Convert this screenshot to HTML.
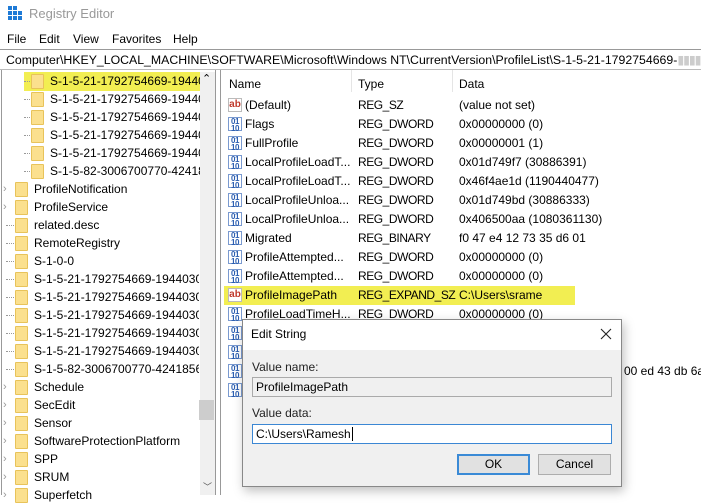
<!DOCTYPE html>
<html><head><meta charset="utf-8"><style>
*{margin:0;padding:0;box-sizing:border-box}
body{width:701px;height:495px;overflow:hidden;background:#fff;font-family:"Liberation Sans",sans-serif;font-size:12px;color:#000;position:relative}
.a{position:absolute;white-space:nowrap}
.f{position:absolute;width:13px;height:15px;background:#fbe08e;border:1px solid #e8c35a;border-radius:1px}
.ic{position:absolute;width:14px;height:14px;font-size:8px;line-height:7px;font-weight:bold;color:#2a5db0;border:1px solid #7a9ad0;background:#fff;text-align:center;letter-spacing:-0.5px}
.ab{position:absolute;width:14px;height:14px;font-size:10px;line-height:12px;font-weight:bold;color:#c0392b;border:1px solid #bbb;background:#fff;text-align:center}
.dot{position:absolute;border-top:1px dotted #999;width:8px}
.arr{position:absolute;color:#999;font-size:11px}
.ty{letter-spacing:-0.45px}
</style></head><body>
<div class="a" style="left:8px;top:6px;width:14px;height:14px;display:grid;grid-template-columns:repeat(3,4px);gap:1px">
<i style="background:#1e7ad6"></i><i style="background:#1e7ad6"></i><i style="background:#fff"></i><i style="background:#1e7ad6"></i><i style="background:#1e7ad6"></i><i style="background:#1e7ad6"></i><i style="background:#1e7ad6"></i><i style="background:#1e7ad6"></i><i style="background:#1e7ad6"></i></div>
<div class="a" style="left:29px;top:6px;font-size:13px;color:#999">Registry Editor</div>
<div class="a" style="left:7px;top:32px;font-size:12px">File</div>
<div class="a" style="left:39px;top:32px">Edit</div>
<div class="a" style="left:73px;top:32px">View</div>
<div class="a" style="left:112px;top:32px">Favorites</div>
<div class="a" style="left:173px;top:32px">Help</div>
<div class="a" style="left:0;top:49px;width:701px;height:21px;border-top:1px solid #999;border-bottom:1px solid #bbb;padding:3px 0 0 6px;font-size:12.3px">Computer\HKEY_LOCAL_MACHINE\SOFTWARE\Microsoft\Windows NT\CurrentVersion\ProfileList\S-1-5-21-1792754669-<span style="color:#ccc;letter-spacing:-1px">▮▮▮▮▮▮▮</span></div>
<div class="a" style="left:0;top:70px;width:216px;height:425px;border-right:1px solid #999"></div>
<div class="a" style="left:1px;top:70px;height:425px;border-left:1px solid #999"></div>
<div class="a" style="left:24px;top:72px;width:186px;height:19px;background:#f2ee52"></div>
<div id="tree"></div>
<div class="a" style="left:200px;top:72px;width:15px;height:423px;background:#f0f0f0"></div>
<div class="a" style="left:199px;top:400px;width:15px;height:20px;background:#cdcdcd"></div>
<div class="a" style="left:202px;top:72px;font-size:11px">⌃</div>
<div class="a" style="left:203px;top:480px;font-size:9px;color:#555">﹀</div>
<div class="a" style="left:220px;top:70px;width:481px;height:425px;border-left:1px solid #999"></div>
<div class="a" style="left:229px;top:77px">Name</div>
<div class="a" style="left:351px;top:70px;height:22px;border-left:1px solid #e5e5e5"></div>
<div class="a" style="left:358px;top:77px">Type</div>
<div class="a" style="left:452px;top:70px;height:22px;border-left:1px solid #e5e5e5"></div>
<div class="a" style="left:459px;top:77px">Data</div>
<div class="a" style="left:224px;top:286px;width:351px;height:19px;background:#f2ee52"></div>
<div id="rows"></div>
<div class="a" style="left:624px;top:364px">00 ed 43 db 6a</div>
<div class="a" style="left:242px;top:319px;width:380px;height:168px;background:#f0f0f0;border:1px solid #888;box-shadow:2px 4px 10px rgba(0,0,0,.25)">
 <div style="position:absolute;left:0;top:0;width:378px;height:30px;background:#fff"></div>
 <div class="a" style="left:8px;top:7px">Edit String</div>
 <svg class="a" style="left:357px;top:8px" width="12" height="12"><path d="M1 1L11 11M11 1L1 11" stroke="#222" stroke-width="1.1"/></svg>
 <div class="a" style="left:9px;top:40px;color:#222">Value name:</div>
 <div class="a" style="left:9px;top:57px;width:360px;height:20px;border:1px solid #aaa;background:#f0f0f0;padding:2px 0 0 3px">ProfileImagePath</div>
 <div class="a" style="left:9px;top:86px;color:#222">Value data:</div>
 <div class="a" style="left:9px;top:104px;width:360px;height:20px;border:1px solid #3b87d4;background:#fff;padding:2px 0 0 3px">C:\Users\Ramesh<span style="border-left:1px solid #000;margin-left:1px"></span></div>
 <div class="a" style="left:214px;top:134px;width:73px;height:21px;border:2px solid #3a8ad6;background:#e1e1e1;text-align:center;line-height:17px">OK</div>
 <div class="a" style="left:295px;top:134px;width:73px;height:21px;border:1px solid #adadad;background:#e1e1e1;text-align:center;line-height:19px">Cancel</div>
</div>
<script>
var t=document.getElementById('tree'),h='';
var kids=['S-1-5-21-1792754669-194403','S-1-5-21-1792754669-194403','S-1-5-21-1792754669-194403','S-1-5-21-1792754669-194403','S-1-5-21-1792754669-194403','S-1-5-82-3006700770-424185'];
kids.forEach(function(s,i){var y=72+i*18;h+='<div class="dot" style="left:24px;top:'+(y+9)+'px"></div><div class="f" style="left:31px;top:'+(y+2)+'px"></div><div class="a" style="left:50px;top:'+(y+2)+'px;width:150px;overflow:hidden">'+s+'</div>';});
var roots=[['ProfileNotification',1],['ProfileService',1],['related.desc',0],['RemoteRegistry',0],['S-1-0-0',0],['S-1-5-21-1792754669-19440305',0],['S-1-5-21-1792754669-19440305',0],['S-1-5-21-1792754669-19440305',0],['S-1-5-21-1792754669-19440305',0],['S-1-5-21-1792754669-19440305',0],['S-1-5-82-3006700770-42418561',0],['Schedule',1],['SecEdit',1],['Sensor',1],['SoftwareProtectionPlatform',1],['SPP',1],['SRUM',1],['Superfetch',1]];
roots.forEach(function(r,i){var y=180+i*18;h+=(r[1]?'<div class="arr" style="left:3px;top:'+(y+3)+'px">›</div>':'<div class="dot" style="left:6px;top:'+(y+9)+'px"></div>')+'<div class="f" style="left:15px;top:'+(y+2)+'px"></div><div class="a" style="left:34px;top:'+(y+2)+'px;width:165px;overflow:hidden">'+r[0]+'</div>';});
t.innerHTML=h;
var rows=[['ab','(Default)','REG_SZ','(value not set)'],['b','Flags','REG_DWORD','0x00000000 (0)'],['b','FullProfile','REG_DWORD','0x00000001 (1)'],['b','LocalProfileLoadT...','REG_DWORD','0x01d749f7 (30886391)'],['b','LocalProfileLoadT...','REG_DWORD','0x46f4ae1d (1190440477)'],['b','LocalProfileUnloa...','REG_DWORD','0x01d749bd (30886333)'],['b','LocalProfileUnloa...','REG_DWORD','0x406500aa (1080361130)'],['b','Migrated','REG_BINARY','f0 47 e4 12 73 35 d6 01'],['b','ProfileAttempted...','REG_DWORD','0x00000000 (0)'],['b','ProfileAttempted...','REG_DWORD','0x00000000 (0)'],['ab','ProfileImagePath','REG_EXPAND_SZ','C:\\Users\\srame'],['b','ProfileLoadTimeH...','REG_DWORD','0x00000000 (0)'],['b','','',''],['b','','',''],['b','','',''],['b','','','']];
var r='';rows.forEach(function(x,i){var y=96+i*19;r+=(x[0]=='ab'?'<div class="ab" style="left:228px;top:'+(y+2)+'px">ab</div>':'<div class="ic" style="left:228px;top:'+(y+2)+'px">01<br>10</div>')+'<div class="a" style="left:245px;top:'+(y+2)+'px">'+x[1]+'</div><div class="a ty" style="left:358px;top:'+(y+2)+'px">'+x[2]+'</div><div class="a" style="left:459px;top:'+(y+2)+'px">'+x[3]+'</div>';});
document.getElementById('rows').innerHTML=r;
</script>
</body></html>
